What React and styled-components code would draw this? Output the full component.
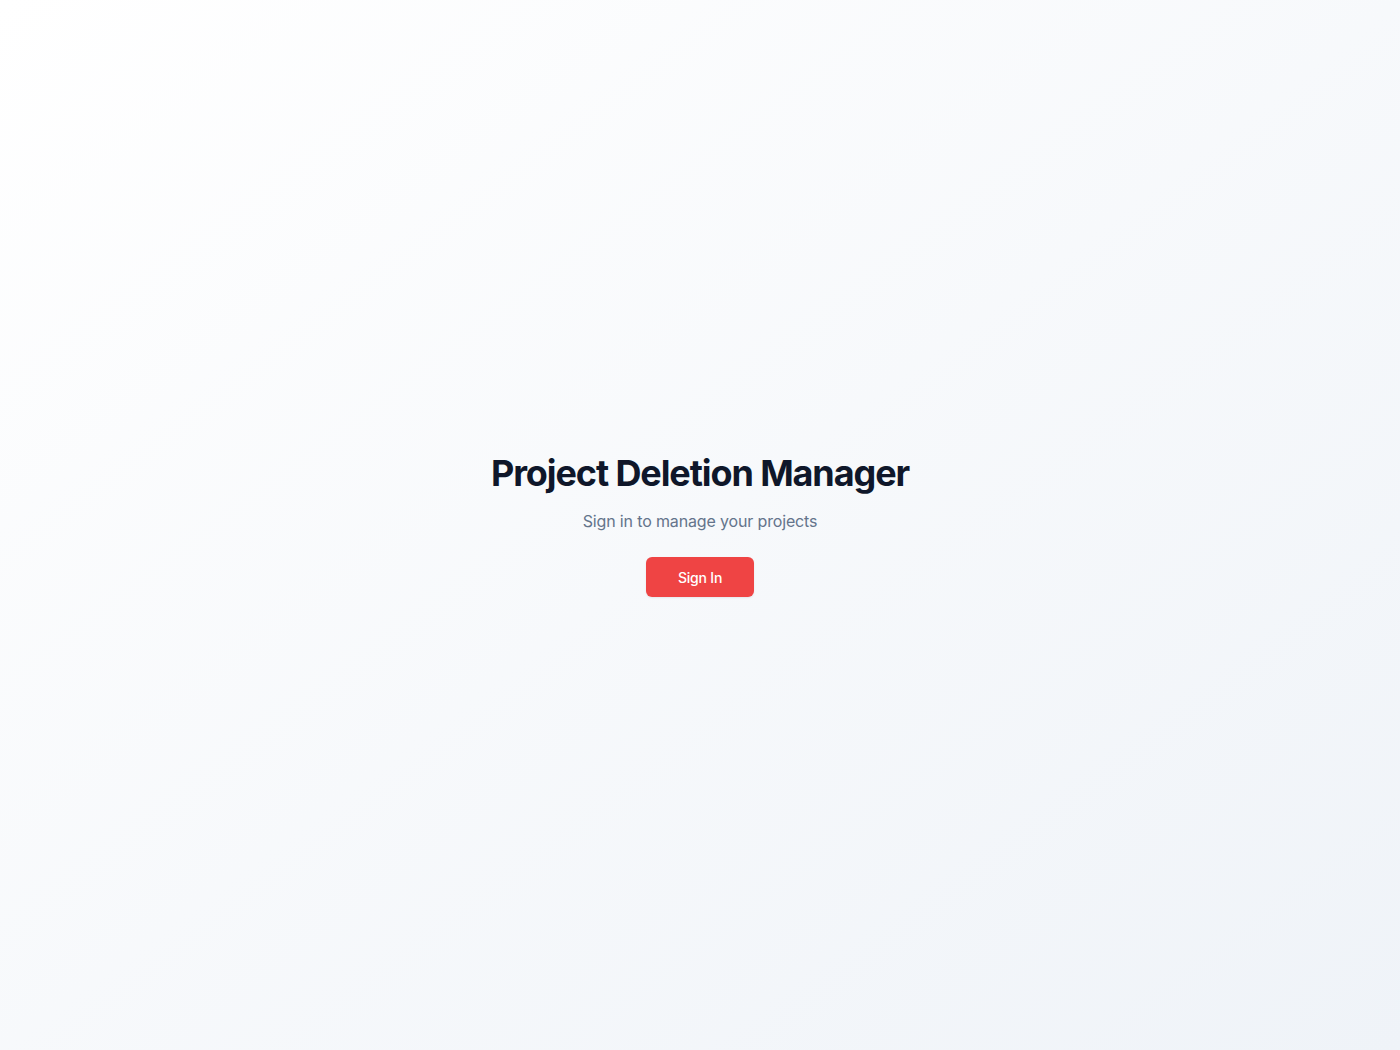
import React from 'react';
import styled, { createGlobalStyle } from 'styled-components';

const GlobalStyle = createGlobalStyle`
  * { box-sizing: border-box; }
  html, body, #root { margin: 0; padding: 0; height: 100%; }
  body {
    font-family: 'Inter', 'Noto Sans', sans-serif;
    -webkit-font-smoothing: antialiased;
  }
`;

const Page = styled.main`
  min-height: 100vh;
  display: flex;
  align-items: center;
  justify-content: center;
  background: linear-gradient(to bottom right, #ffffff, #eff3f8);
`;

const Hero = styled.section`
  display: flex;
  flex-direction: column;
  align-items: center;
  text-align: center;
`;

const Title = styled.h1`
  margin: 0 0 16px;
  font-size: 36px;
  line-height: 40px;
  font-weight: 700;
  letter-spacing: -1.1px;
  color: #0f172a;
`;

const Subtitle = styled.p`
  margin: 0 0 24px;
  font-size: 16px;
  line-height: 24px;
  letter-spacing: -0.15px;
  color: #64748b;
`;

const SignInButton = styled.button`
  height: 40px;
  padding: 0 32px;
  border: none;
  border-radius: 6px;
  background: #ef4444;
  color: #ffffff;
  font-family: inherit;
  font-size: 14px;
  font-weight: 500;
  letter-spacing: -0.2px;
  cursor: pointer;
  box-shadow: 0 1px 2px rgba(15, 23, 42, 0.08);
  &:hover { background: #dc2626; }
`;

export default function App() {
  return (
    <>
      <GlobalStyle />
      <Page>
        <Hero>
          <Title>Project Deletion Manager</Title>
          <Subtitle>Sign in to manage your projects</Subtitle>
          <SignInButton>Sign In</SignInButton>
        </Hero>
      </Page>
    </>
  );
}
